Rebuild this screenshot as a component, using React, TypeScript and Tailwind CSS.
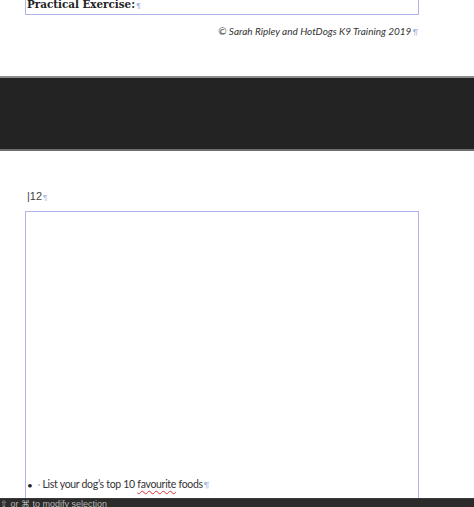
import React from "react";

const Pilcrow = () => (
  <span className="text-[8px] text-[#9fb4d8] align-baseline ml-[1px]">¶</span>
);

export default function App() {
  return (
    <div className="w-[474px] h-[507px] bg-white overflow-hidden flex flex-col">
      {/* top box (clipped) */}
      <div className="ml-[25px] w-[394px] h-[15px] border-x border-b border-[#b3b3ec] overflow-hidden shrink-0">
        <div
          className="mt-[-4px] ml-[1px] text-[11.5px] leading-[16px] font-bold text-[#222] whitespace-nowrap"
          style={{ fontFamily: '"DejaVu Serif Condensed", "DejaVu Serif", serif' }}
        >
          Practical Exercise:
          <Pilcrow />
        </div>
      </div>

      {/* copyright */}
      <div className="h-[61px] shrink-0 flex justify-end pr-[56px] pt-[9px]">
        <div
          className="text-[10px] leading-[14px] italic text-[#333] whitespace-nowrap"
          style={{ fontFamily: 'Lato, "Open Sans", sans-serif' }}
        >
          © Sarah Ripley and HotDogs K9 Training 2019
          <Pilcrow />
        </div>
      </div>

      {/* dark band */}
      <div className="h-[75px] shrink-0 bg-[#232323] border-t-[2px] border-t-[#8c8c8c] border-b-[2px] border-b-[#6e6e6e]" />

      {/* page number */}
      <div className="h-[60px] shrink-0 pl-[27px] pt-[38px]">
        <div
          className="text-[11px] leading-[14px] text-[#444] whitespace-nowrap"
          style={{ fontFamily: '"Liberation Sans", Arial, sans-serif' }}
        >
          |12
          <Pilcrow />
        </div>
      </div>

      {/* second box */}
      <div className="ml-[25px] w-[394px] h-[287px] shrink-0 border-x border-t border-[#b3b3ec] flex flex-col justify-end pb-[6px]">
        <div
          className="flex items-center text-[10.5px] leading-[14px] tracking-[-0.3px] text-[#333] whitespace-nowrap"
          style={{ fontFamily: 'Lato, "Open Sans", sans-serif' }}
        >
          <span className="ml-[1px] text-[10px] text-[#222]">•</span>
          <span className="ml-[5px] w-[2px] h-[2px] rounded-full bg-[#bbb]" />
          <span className="ml-[3px]">
            List your dog’s top 10{" "}
            <span className="underline decoration-wavy decoration-[#e03030] decoration-[1px] underline-offset-[2px]">
              favourite
            </span>{" "}
            foods
            <Pilcrow />
          </span>
        </div>
      </div>

      {/* bottom bar */}
      <div className="h-[10px] shrink-0 bg-[#2b2b2b] overflow-hidden border-t border-[#3a3a3a]">
        <div
          className="text-[9px] leading-[12px] text-[#b5b5b5] whitespace-nowrap mt-[-1px]"
          style={{ fontFamily: '"Liberation Sans", Arial, sans-serif' }}
        >
          ⇧ or ⌘ to modify selection
        </div>
      </div>
    </div>
  );
}
